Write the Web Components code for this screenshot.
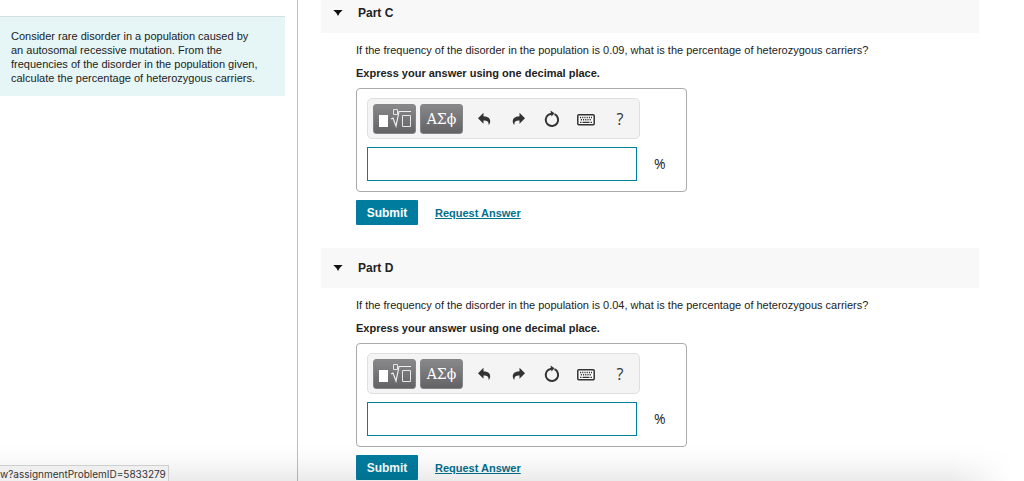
<!DOCTYPE html>
<html lang="en">
<head>
<meta charset="utf-8">
<title>Assignment problem</title>
<style>
body { margin: 0; background: #fff; color: #222; font-family: "Liberation Sans", Arial, sans-serif; font-size: 12px; line-height: 14px; }
</style>
</head>
<body>
<problem-page>
  <problem-intro slot="side">Consider rare disorder in a population caused by an autosomal recessive mutation. From the frequencies of the disorder in the population given, calculate the percentage of heterozygous carriers.</problem-intro>
  <problem-part heading="Part C" unit="%">If the frequency of the disorder in the population is 0.09, what is the percentage of heterozygous carriers?</problem-part>
  <problem-part heading="Part D" unit="%">If the frequency of the disorder in the population is 0.04, what is the percentage of heterozygous carriers?</problem-part>
  <status-bubble slot="status">w?assignmentProblemID=5833279</status-bubble>
</problem-page>

<template id="page-t">
<style>
:host { display: block; position: relative; height: 100vh; overflow: hidden; }
.cols { display: grid; grid-template-columns: 29.1% 1fr; min-height: 100%; }
aside { box-sizing: border-box; border-right: 1px solid #b9c0cb; padding: 16px 12px 0 0; }
main { margin-top: -7px; padding: 0 45px 0 23px; }
.shade { position: absolute; left: 0; right: 0; bottom: 0; height: 36px; pointer-events: none;
  background: linear-gradient(to bottom, rgba(0,0,0,0), rgba(0,0,0,.02) 40%, rgba(0,0,0,.08));
  -webkit-mask-image: linear-gradient(to right, #000 93%, transparent 99%); mask-image: linear-gradient(to right, #000 93%, transparent 99%); }
.status { position: absolute; left: 0; bottom: 0; }
</style>
<div class="cols"><aside><slot name="side"></slot></aside><main><slot></slot></main></div>
<div class="shade"></div>
<div class="status"><slot name="status"></slot></div>
</template>

<template id="intro-t">
<style>
:host { display: block; background: #e6f6f7; border-top: 1px solid #d3dfe0; padding: 12px 24px 11px 11px; font-size: 11px; line-height: 14px; }
</style>
<slot></slot>
</template>

<template id="status-t">
<style>
:host { display: block; box-sizing: border-box; height: 16px; padding: 0 2px 0 0; white-space: nowrap;
  background: #efefef; border: 1px solid #cfcfcf; border-width: 1px 1px 0 0; color: #333; font: 10px/17px Inter, sans-serif; }
</style>
<slot></slot>
</template>

<template id="part-t">
<style>
:host { display: block; margin-bottom: 23px; }
header { display: flex; align-items: center; gap: 15px; height: 40px; padding-left: 12px; background: #f8f8f8; }
header svg { width: 10px; height: 6px; }
h2 { margin: 0; font-size: 12px; line-height: 14px; }
.body { padding: 10px 0 0 35px; }
p { margin: 0 0 9px; font-size: 11px; line-height: 14px; }
.hint { font-weight: bold; margin-bottom: 8px; }
.actions { display: flex; align-items: center; gap: 17px; margin-top: 8px; }
button { height: 25px; width: 62px; padding: 0; border: 0; border-radius: 1px; background: #007c9e; color: #fff; font: bold 12px/14px "Liberation Sans", Arial, sans-serif; }
a { color: #00708f; font-size: 11px; font-weight: bold; }
</style>
<header><svg viewBox="0 0 10 6" aria-hidden="true"><path d="M.3 0h9.4Q7 2 5 6 3 2 .3 0Z" fill="#111"/></svg><h2></h2></header>
<div class="body">
  <p><slot></slot></p>
  <p class="hint">Express your answer using one decimal place.</p>
  <answer-box></answer-box>
  <div class="actions"><button type="button">Submit</button><a href="#">Request Answer</a></div>
</div>
</template>

<template id="box-t">
<style>
:host { display: grid; grid-template-columns: 273px auto; justify-content: start; gap: 8px 10px; box-sizing: border-box; width: 331px; padding: 9px 10px 10px; border: 1px solid #aaa; border-radius: 4px; }
math-toolbar { grid-column: 1; }
.field { grid-column: 1 / 3; display: flex; align-items: center; gap: 17px; }
input { box-sizing: border-box; width: 270px; height: 34px; margin: 0; padding: 0 8px; border: 1px solid #007f9f; border-radius: 0; background: #fff; font: inherit; }
label { font: 14px/16px "Open Sans", sans-serif; }
</style>
<math-toolbar></math-toolbar>
<div class="field"><input id="answer" type="text"><label for="answer"></label></div>
</template>

<template id="bar-t">
<style>
:host { display: flex; align-items: center; box-sizing: border-box; height: 41px; padding: 0 3px 0 5px; background: #f4f4f4; border: 1px solid #dfdfdf; border-radius: 5px; }
button { display: flex; align-items: center; justify-content: center; flex: none; width: 34px; height: 30px; padding: 0; border: 0; background: none; color: #333; font: 16px/18px "Open Sans", sans-serif; }
.pad { width: 43px; margin-right: 4px; border-radius: 3px; background: linear-gradient(#88888b, #636365); border: 1px solid #858588; color: #fff; }
.greek { font: 14px/18px "DejaVu Serif", serif; }
svg { display: block; }
</style>
<button type="button" class="pad" aria-label="Templates"><svg width="36" height="24" viewBox="0 0 36 24" fill="none" stroke="#fff"><path d="M3 8h9v12H3z" fill="#fff" stroke="none"/><path d="M17.500 2.500h4v5h-4z" stroke="#e3e3e3"/><path d="M15 12l2-1 3 8 3-14.500h12" stroke="#eee" stroke-width="1.200"/><path d="M26.500 8.500h8v11h-8z" stroke="#e6e6e6"/></svg></button>
<button type="button" class="pad greek">ΑΣϕ</button>
<button type="button" aria-label="Undo"><svg width="14" height="14" viewBox="0 0 14 14"><path d="M6.500.8v3.400c4.500.1 6.800 2.200 6.700 5.200 0 1.300-.6 2.600-1.600 3.500.3-3-1.400-4.300-5.100-4.300v3.200L1 6.200Z" fill="#333"/></svg></button>
<button type="button" aria-label="Redo"><svg width="14" height="14" viewBox="0 0 14 14"><path d="M8.500.8v3.400C4 4.300 1.700 6.400 1.800 9.400c0 1.300.6 2.600 1.600 3.500-.3-3 1.400-4.300 5.100-4.300v3.200L14 6.200Z" fill="#333"/></svg></button>
<button type="button" aria-label="Reset"><svg width="16" height="18" viewBox="0 0 16 18"><path d="M10.500 4.200A6.200 6.200 0 1 1 4.300 4.800L8 3.500" fill="none" stroke="#333" stroke-width="2"/><path d="M6.500 .5 10.500 3.300 7.500 6.500Z" fill="#333"/></svg></button>
<button type="button" aria-label="Keyboard shortcuts"><svg width="18" height="14" viewBox="0 0 18 14"><rect x=".8" y="2.800" width="16.400" height="10" rx="1" fill="#fff" stroke="#333" stroke-width="1.500"/><path d="M3 5.500h12M3.800 7.800h11" stroke="#333" stroke-width="1.500" stroke-dasharray="1.200 1"/><path d="M3 10.300h1.500M5.500 10.300h7M13.500 10.300H15" stroke="#333" stroke-width="1.300"/></svg></button>
<button type="button" aria-label="Help">?</button>
</template>

<script>
class TemplateElement extends HTMLElement {
  constructor() {
    super();
    const root = this.attachShadow({ mode: "open" });
    root.append(document.getElementById(this.constructor.template).content.cloneNode(true));
  }
}
customElements.define("math-toolbar", class extends TemplateElement { static template = "bar-t"; });
customElements.define("answer-box", class extends TemplateElement {
  static template = "box-t";
  set unit(value) { this.shadowRoot.querySelector("label").textContent = value; }
});
customElements.define("problem-part", class extends TemplateElement {
  static template = "part-t";
  connectedCallback() {
    this.shadowRoot.querySelector("h2").textContent = this.getAttribute("heading");
    this.shadowRoot.querySelector("answer-box").unit = this.getAttribute("unit");
  }
});
customElements.define("problem-intro", class extends TemplateElement { static template = "intro-t"; });
customElements.define("status-bubble", class extends TemplateElement { static template = "status-t"; });
customElements.define("problem-page", class extends TemplateElement { static template = "page-t"; });
</script>
</body>
</html>
